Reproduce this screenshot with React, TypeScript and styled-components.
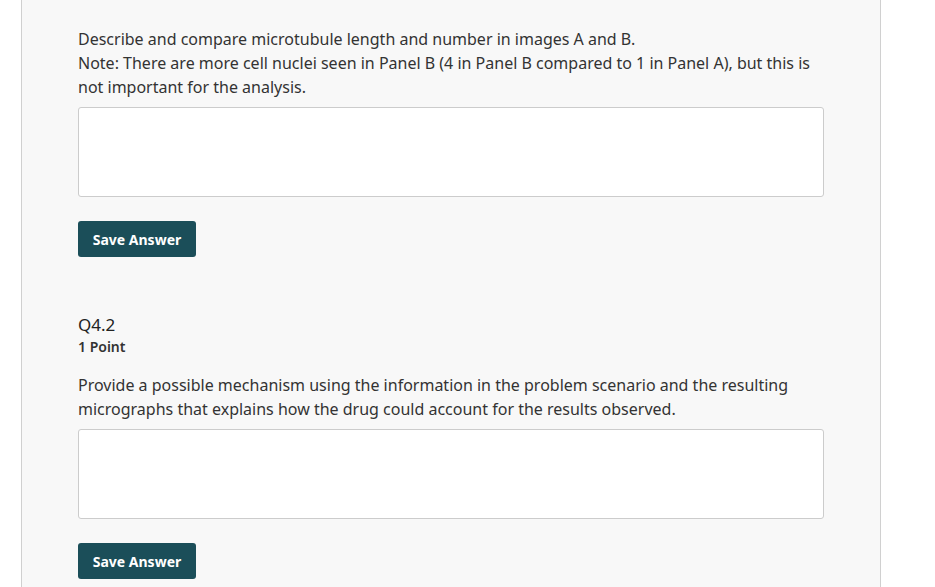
import React from 'react';
import styled, { createGlobalStyle } from 'styled-components';

const GlobalStyle = createGlobalStyle`
  html, body {
    margin: 0;
    padding: 0;
    background: #ffffff;
    font-family: "Noto Sans", "Open Sans", "Liberation Sans", sans-serif;
    color: #333333;
  }
`;

interface QuestionProps {
  number?: string;
  points?: string;
  prompt: React.ReactNode;
}

const Question: React.FC<QuestionProps> = ({ number, points, prompt }) => {
  return (
    <QuestionBlock>
      {number && (
        <Header>
          <QuestionNumber>{number}</QuestionNumber>
          <Points>{points}</Points>
        </Header>
      )}
      <Prompt>{prompt}</Prompt>
      <AnswerBox spellCheck="false" />
      <SaveButton type="button">Save Answer</SaveButton>
    </QuestionBlock>
  );
};

export default function App() {
  return (
    <>
      <GlobalStyle />
      <Page>
        <Panel>
          <Question
            prompt={
              <>
                Describe and compare microtubule length and number in images A and B.
                <br />
                Note: There are more cell nuclei seen in Panel B (4 in Panel B compared to 1 in Panel A), but this is
                not important for the analysis.
              </>
            }
          />
          <Question
            number="Q4.2"
            points="1 Point"
            prompt="Provide a possible mechanism using the information in the problem scenario and the resulting micrographs that explains how the drug could account for the results observed."
          />
        </Panel>
      </Page>
    </>
  );
}

const Page = styled.div`
  display: flex;
  padding-left: 21px;
  height: 587px;
  overflow: hidden;
`;

const Panel = styled.div`
  width: 860px;
  box-sizing: border-box;
  background-color: #f8f8f8;
  border-left: 1px solid #d0d0d0;
  border-right: 1px solid #d0d0d0;
  padding: 27px 56px 0 56px;
  display: flex;
  flex-direction: column;
  gap: 56px;
`;

const QuestionBlock = styled.div`
  display: flex;
  flex-direction: column;
  align-items: flex-start;
`;

const Header = styled.div`
  display: flex;
  flex-direction: column;
  margin-bottom: 16px;
`;

const QuestionNumber = styled.div`
  font-size: 17px;
  line-height: 24px;
  color: #222222;
`;

const Points = styled.div`
  font-size: 14px;
  line-height: 20px;
  font-weight: 600;
  color: #333333;
`;

const Prompt = styled.div`
  font-size: 16px;
  line-height: 24px;
  color: #333333;
  width: 746px;
`;

const AnswerBox = styled.textarea`
  width: 746px;
  height: 90px;
  box-sizing: border-box;
  margin-top: 8px;
  border: 1px solid #cccccc;
  border-radius: 3px;
  background: #ffffff;
  resize: none;
  font-family: inherit;
  font-size: 16px;
  padding: 8px;

  &:focus {
    outline: none;
  }
`;

const SaveButton = styled.button`
  margin-top: 24px;
  width: 118px;
  height: 36px;
  padding: 0;
  border: none;
  border-radius: 3px;
  background-color: #1b4e59;
  color: #ffffff;
  font-family: "Noto Sans", "Open Sans", sans-serif;
  font-size: 14px;
  font-weight: 700;
  cursor: pointer;
`;
